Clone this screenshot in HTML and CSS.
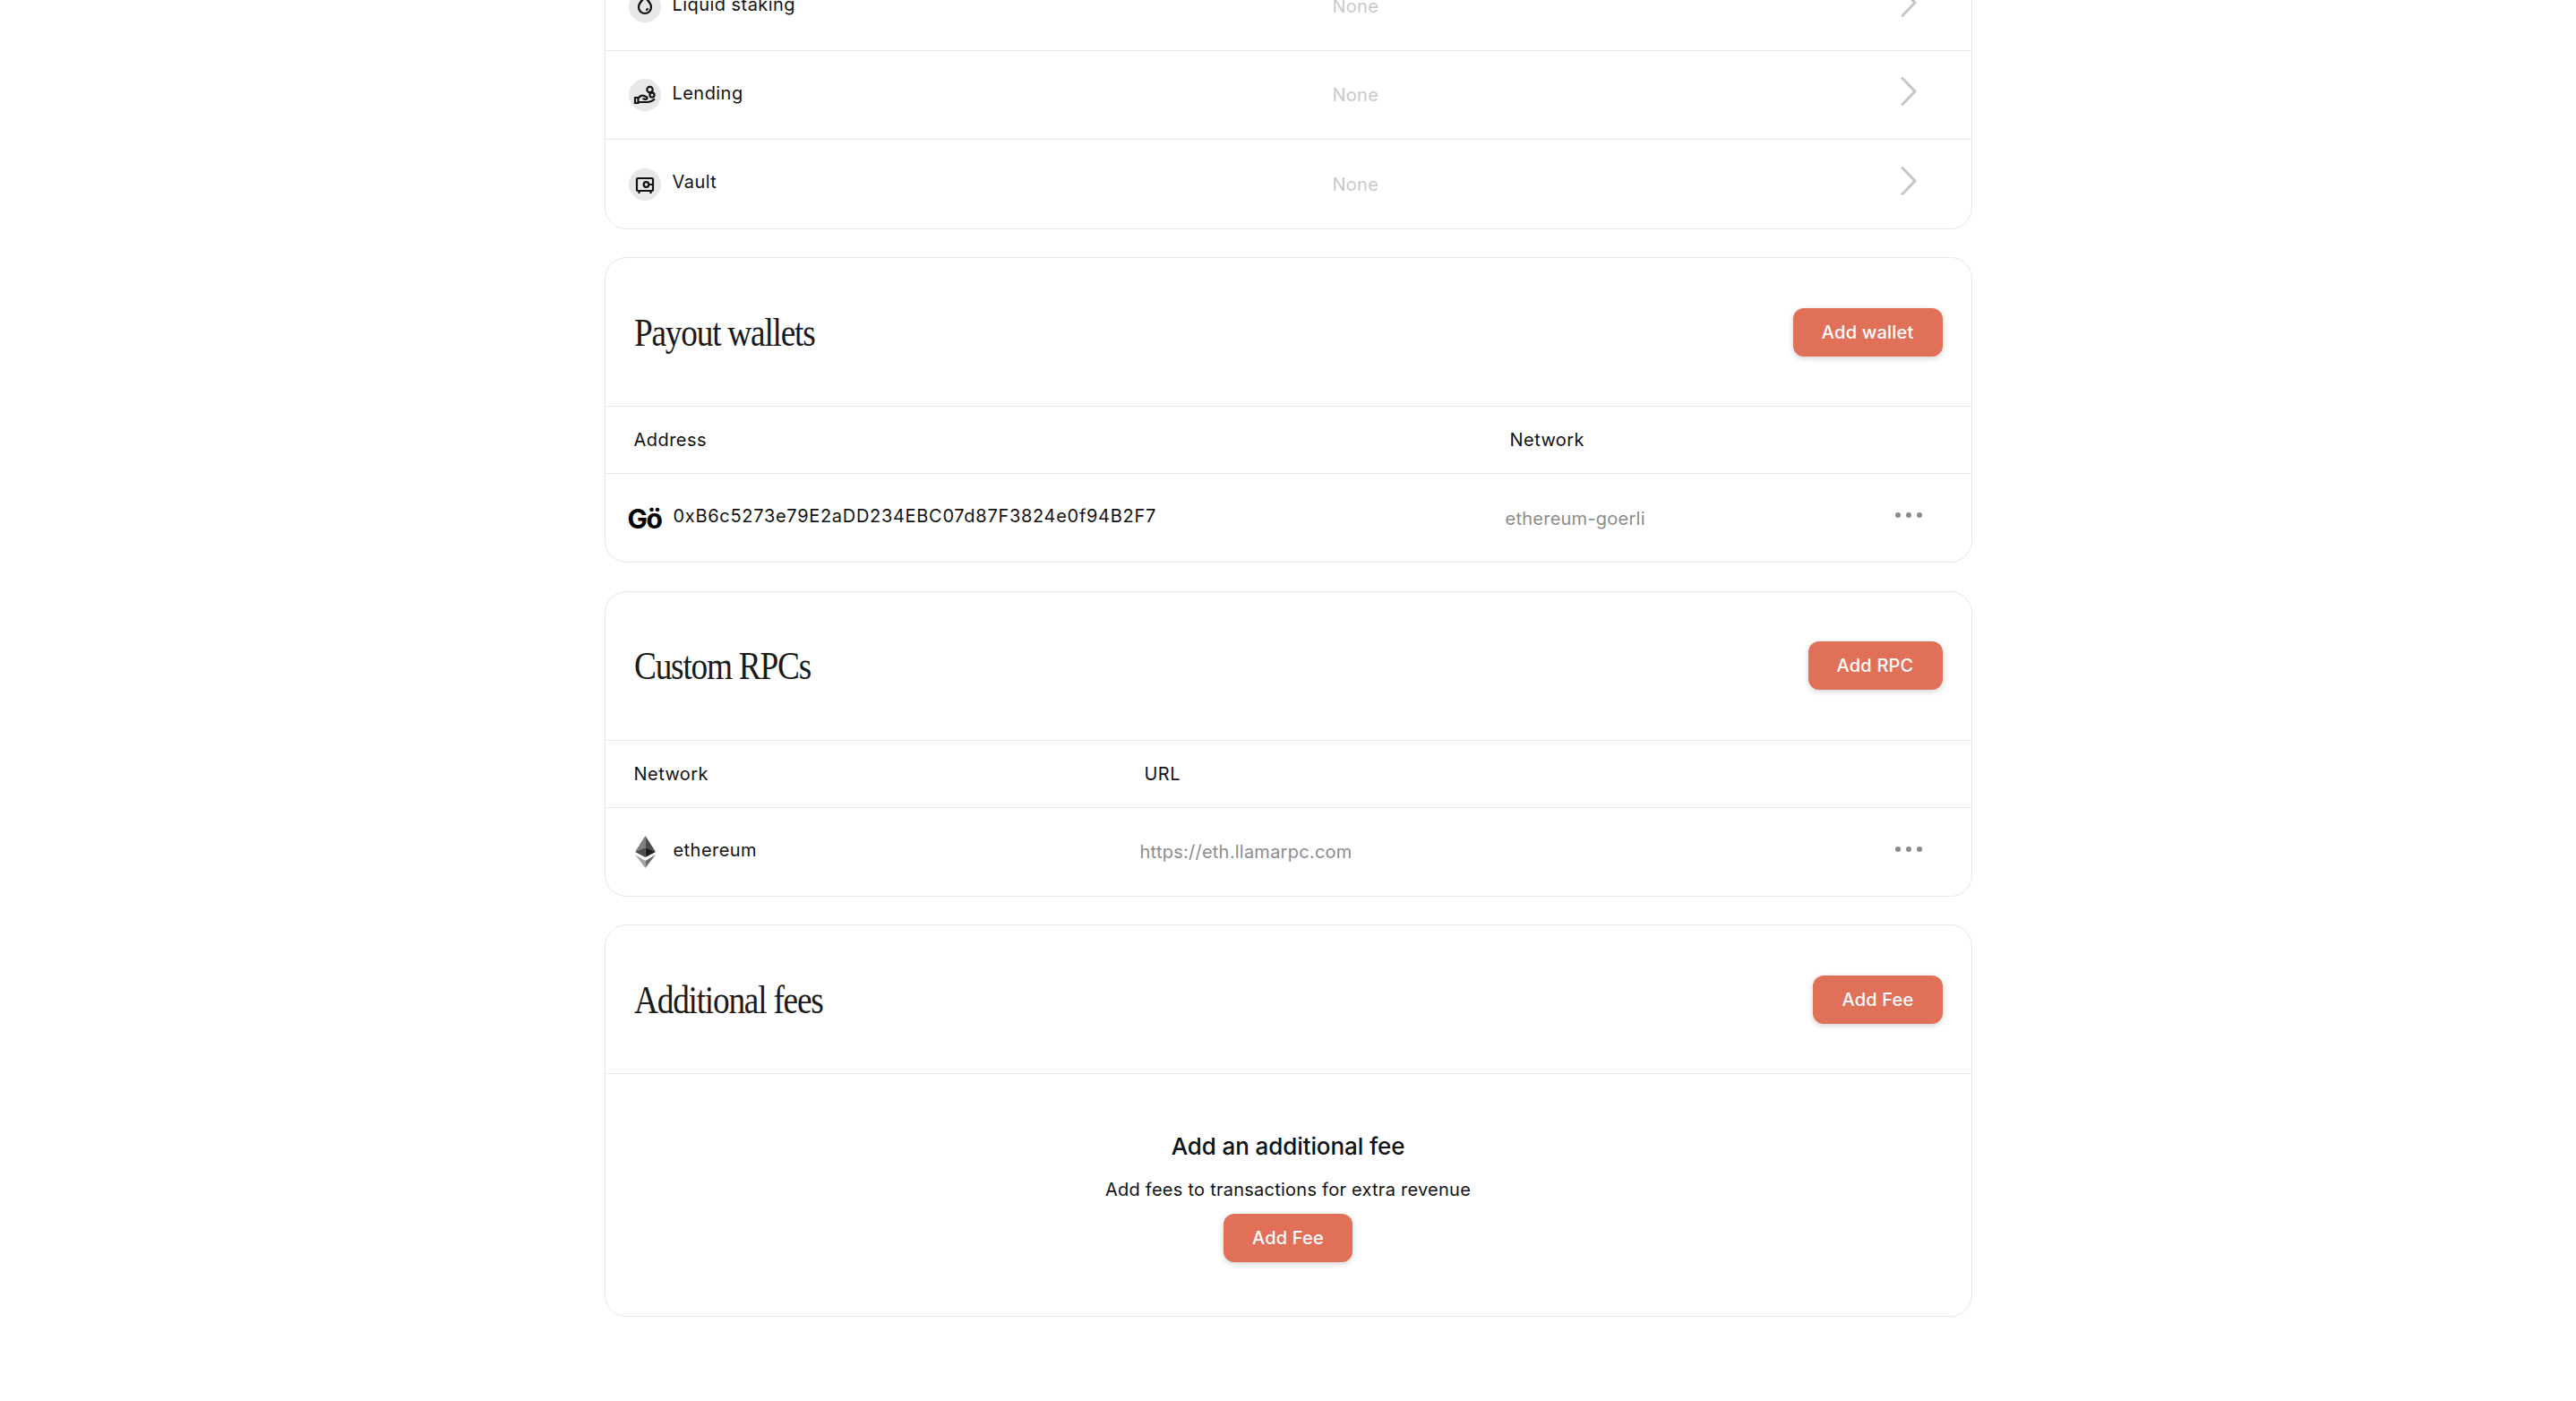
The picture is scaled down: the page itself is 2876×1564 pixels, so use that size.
FILE: index.html
```html
<!DOCTYPE html>
<html>
<head>
    <title>Settings</title>
    <link rel="stylesheet" href="styles.css">
</head>
<body>
<div class="page">
    <!-- extensions card, scrolled partly out of view -->
    <div class="card">
        <div class="ext-row">
            <div class="ext-name">
                <span class="ext-icon">
                    <svg width="36" height="36" viewBox="0 0 36 36" fill="none" stroke="#111" stroke-width="2.2">
                        <path d="M18 8c4 4 7 7 7 11a7 7 0 0 1-14 0c0-4 3-7 7-11z"/>
                        <path d="M20 22l1-1" stroke-linecap="round"/>
                    </svg>
                </span>
                <span>Liquid staking</span>
            </div>
            <div class="ext-value">None</div>
            <svg class="chevron" width="18" height="32" viewBox="0 0 18 32" fill="none"><path d="M2 1.5L16 16L2 30.5"/></svg>
        </div>
        <div class="ext-row">
            <div class="ext-name">
                <span class="ext-icon">
                    <svg width="36" height="36" viewBox="0 0 36 36" fill="none" stroke="#111" stroke-width="2.2">
                        <circle cx="23.5" cy="12" r="3.2"/>
                        <circle cx="26" cy="18" r="2.6"/>
                        <path d="M7 21h3.500v6H7z"/>
                        <path d="M10.500 21.500c2-2.500 4-3.500 6-2.700l3 1.200c2 .6 1 3.200-1 2.800l-3-.6"/>
                        <path d="M10.500 26h10.500c2.500 0 5-1 8-3.500"/>
                    </svg>
                </span>
                <span>Lending</span>
            </div>
            <div class="ext-value">None</div>
            <svg class="chevron" width="18" height="32" viewBox="0 0 18 32" fill="none"><path d="M2 1.5L16 16L2 30.5"/></svg>
        </div>
        <div class="ext-row last">
            <div class="ext-name">
                <span class="ext-icon">
                    <svg width="36" height="36" viewBox="0 0 36 36" fill="none" stroke="#111" stroke-width="2.2">
                        <rect x="9" y="11" width="18" height="14" rx="1"/>
                        <circle cx="19.500" cy="18" r="2.800"/>
                        <path d="M22 18h5M11.500 25v3M24.500 25v3"/>
                    </svg>
                </span>
                <span>Vault</span>
            </div>
            <div class="ext-value">None</div>
            <svg class="chevron" width="18" height="32" viewBox="0 0 18 32" fill="none"><path d="M2 1.5L16 16L2 30.5"/></svg>
        </div>
    </div>

    <div class="card">
        <div class="card-header">
            <h2 class="card-title">Payout wallets</h2>
            <button class="btn">Add wallet</button>
        </div>
        <div class="table-head wallets">
            <div>Address</div>
            <div>Network</div>
        </div>
        <div class="table-row wallets">
            <div class="row-main">
                <span class="goerli">Gö</span>
                <span class="address">0xB6c5273e79E2aDD234EBC07d87F3824e0f94B2F7</span>
            </div>
            <div class="row-muted">ethereum-goerli</div>
            <div class="dots"><i></i><i></i><i></i></div>
        </div>
    </div>

    <div class="card">
        <div class="card-header">
            <h2 class="card-title">Custom RPCs</h2>
            <button class="btn">Add RPC</button>
        </div>
        <div class="table-head rpcs">
            <div>Network</div>
            <div>URL</div>
        </div>
        <div class="table-row rpcs">
            <div class="row-main">
                <svg class="eth" width="23" height="36" viewBox="0 0 23 36">
                    <polygon points="0,18 11.5,0 11.5,13" fill="#7f7f7f"/>
                    <polygon points="23,18 11.5,0 11.5,13" fill="#4c4c4c"/>
                    <polygon points="0,18 11.5,13 11.5,24" fill="#4c4c4c"/>
                    <polygon points="23,18 11.5,13 11.5,24" fill="#1c1c1c"/>
                    <polygon points="0,21 11.5,36 11.5,28" fill="#a3a3a3"/>
                    <polygon points="23,21 11.5,36 11.5,28" fill="#6e6e6e"/>
                </svg>
                <span>ethereum</span>
            </div>
            <div class="row-muted">https://eth.llamarpc.com</div>
            <div class="dots"><i></i><i></i><i></i></div>
        </div>
    </div>

    <div class="card">
        <div class="card-header">
            <h2 class="card-title">Additional fees</h2>
            <button class="btn">Add Fee</button>
        </div>
        <div class="empty">
            <div class="empty-title">Add an additional fee</div>
            <div class="empty-text">Add fees to transactions for extra revenue</div>
            <button class="btn">Add Fee</button>
        </div>
    </div>
</div>
</body>
</html>
```

FILE: styles.css
```css
html, body {
    margin: 0;
    height: 100%;
    overflow: hidden;
    background: #fff;
}
body {
    font-family: Inter, "Liberation Sans", sans-serif;
    color: #111;
    font-size: 20px;
    letter-spacing: 0.25px;
}
* {
    box-sizing: border-box;
}

.page {
    width: 1527px;
    margin: -43px auto 0;
    display: flex;
    flex-direction: column;
    gap: 31.4px;
}
.card {
    border: 1px solid #e8e8e8;
    border-radius: 24px;
    background: #fff;
}

/* extension rows */
.ext-row {
    height: 99px;
    display: flex;
    align-items: center;
    padding-left: 26px;
    border-bottom: 1px solid #e8e8e8;
}
.ext-row.last {
    border-bottom: none;
}
.ext-name {
    width: 786px;
    display: flex;
    align-items: center;
    gap: 13px;
    letter-spacing: 0.45px;
}
.ext-name span:last-child {
    margin-bottom: 5px;
}
.ext-icon {
    width: 36px;
    height: 36px;
    border-radius: 50%;
    background: #e8e8e8;
    display: block;
}
.ext-icon svg {
    display: block;
}
.ext-value {
    width: 634px;
    color: #c9c9c9;
}
.chevron {
    margin-bottom: 8px;
}
.chevron path {
    stroke: #c6c6c6;
    stroke-width: 3;
    stroke-linecap: round;
    stroke-linejoin: round;
}

/* card headers */
.card-header {
    height: 166px;
    display: flex;
    align-items: center;
    justify-content: space-between;
    padding: 0 32px;
    border-bottom: 1px solid #e8e8e8;
}
.card-title {
    margin: 0;
    font-family: "Liberation Serif", serif;
    font-weight: 400;
    font-size: 45px;
    letter-spacing: -1.5px;
    color: #1a1a1a;
    transform: scaleX(0.83);
    transform-origin: left center;
}
.btn {
    height: 54px;
    padding: 0 32px;
    border: none;
    border-radius: 12px;
    background: #e07158;
    color: #fff;
    font-family: inherit;
    font-size: 20px;
    font-weight: 500;
    letter-spacing: 0.2px;
    box-shadow: 0 2px 6px rgba(0, 0, 0, 0.18);
}

/* tables */
.table-head {
    height: 75px;
    display: grid;
    align-items: center;
    padding-left: 32px;
    border-bottom: 1px solid #e8e8e8;
    letter-spacing: 0.45px;
}
.table-head.wallets {
    grid-template-columns: 978px 1fr;
    padding-bottom: 1px;
}
.table-head.rpcs {
    grid-template-columns: 570px 1fr;
}
.table-row {
    height: 98px;
    display: grid;
    align-items: center;
    padding-left: 25px;
}
.table-row.wallets {
    grid-template-columns: 980px 435px 1fr;
}
.table-row.rpcs {
    grid-template-columns: 572px 843px 1fr;
}
.row-main {
    display: flex;
    align-items: center;
    gap: 13px;
    letter-spacing: 0.45px;
}
.row-main span:last-child {
    margin-bottom: 4px;
}
.row-main .address {
    letter-spacing: 0.7px;
}
.goerli {
    width: 38px;
    font-size: 30px;
    font-weight: 700;
    color: #000;
    line-height: 1;
    letter-spacing: -1.5px;
    margin-bottom: -2px;
}
.eth {
    margin-left: 8px;
    margin-right: 7px;
}
.row-muted {
    color: #8c8c8c;
    padding-top: 1px;
}
.dots {
    display: flex;
    gap: 6px;
    margin-bottom: 6px;
}
.dots i {
    width: 6px;
    height: 6px;
    border-radius: 50%;
    background: #8a8a8a;
}

/* empty state */
.empty {
    height: 270px;
    display: flex;
    flex-direction: column;
    align-items: center;
    padding-top: 65px;
}
.empty-title {
    font-size: 26px;
    font-weight: 500;
    line-height: 32px;
    letter-spacing: -0.1px;
}
.empty-text {
    line-height: 26px;
    margin-top: 19px;
    margin-bottom: 14px;
}
```
